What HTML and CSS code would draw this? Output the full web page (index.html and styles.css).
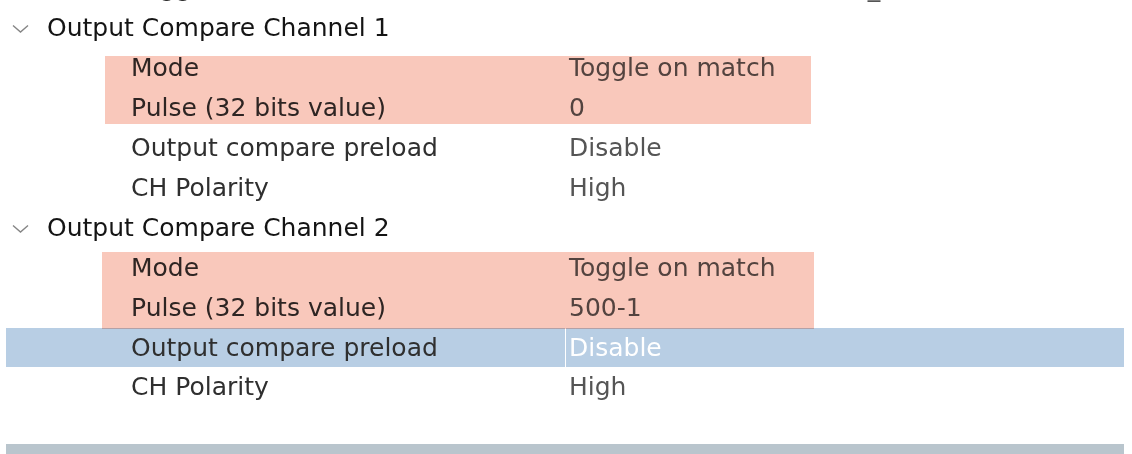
FILE: index.html
```html
<!DOCTYPE html>
<html lang="en">
<head>
<meta charset="utf-8">
<title>Parameter Settings</title>
<link rel="stylesheet" href="styles.css">
</head>
<body>
<div class="panel">
  <div class="tree">
    <div class="row">
      <div class="cell label">Trigger Event Selection</div>
      <div class="cell value">Reset (UG bit from TIMx_EGR)</div>
    </div>

    <div class="row group">
      <svg class="chevron" width="17" height="9" viewBox="0 0 17 9"><path d="M1 1.5 L8.5 8 L16 1.5" fill="none" stroke="#858585" stroke-width="1.4"/></svg>
      <span class="group-title">Output Compare Channel 1</span>
    </div>
    <div class="mark mark-a">
      <div class="row">
        <div class="cell label">Mode</div>
        <div class="cell value">Toggle on match</div>
      </div>
      <div class="row">
        <div class="cell label">Pulse (32 bits value)</div>
        <div class="cell value">0</div>
      </div>
    </div>
    <div class="row">
      <div class="cell label">Output compare preload</div>
      <div class="cell value">Disable</div>
    </div>
    <div class="row">
      <div class="cell label">CH Polarity</div>
      <div class="cell value">High</div>
    </div>

    <div class="row group">
      <svg class="chevron" width="17" height="9" viewBox="0 0 17 9"><path d="M1 1.5 L8.5 8 L16 1.5" fill="none" stroke="#858585" stroke-width="1.4"/></svg>
      <span class="group-title">Output Compare Channel 2</span>
    </div>
    <div class="mark mark-b">
      <div class="row">
        <div class="cell label">Mode</div>
        <div class="cell value">Toggle on match</div>
      </div>
      <div class="row">
        <div class="cell label">Pulse (32 bits value)</div>
        <div class="cell value">500-1</div>
      </div>
    </div>
    <div class="row selected">
      <div class="cell label">Output compare preload</div>
      <div class="cell value">Disable</div>
    </div>
    <div class="row">
      <div class="cell label">CH Polarity</div>
      <div class="cell value">High</div>
    </div>
  </div>
  <div class="hscroll"></div>
</div>
</body>
</html>
```

FILE: styles.css
```css
html, body {
  margin: 0;
  padding: 0;
  background: #ffffff;
  overflow: hidden;
}

body {
  font-family: "DejaVu Sans", "Liberation Sans", sans-serif;
  font-size: 25px;
}

.panel {
  margin: 0 8px 0 6px;
  height: 454px;
  overflow: hidden;
}

.tree {
  margin-top: -32.5px;
}

.row {
  display: grid;
  grid-template-columns: 559px 1fr;
  height: 40px;
  line-height: 40px;
  white-space: nowrap;
}

.cell {
  overflow: hidden;
}

.label {
  padding-left: 125px;
  color: #2f2f2f;
}

.value {
  padding-left: 3px;
  border-left: 1px solid transparent;
  color: #555555;
}

.row.group {
  display: flex;
  align-items: center;
  color: #141414;
}

.chevron {
  margin-left: 6px;
  margin-top: 1px;
  flex: none;
}

.group-title {
  margin-left: 18px;
}

.row.selected {
  background: #b8cee4;
  height: 39px;
}

.row.selected .value {
  border-left-color: #ffffff;
  color: #ffffff;
}

/* translucent marker laid over pairs of rows */
.mark {
  position: relative;
}

.mark::after {
  content: "";
  position: absolute;
  background: #f9c8bb;
  mix-blend-mode: multiply;
  pointer-events: none;
  z-index: 2;
}

.mark-a::after {
  left: 99px;
  right: 313px;
  top: 8.5px;
  bottom: 3.5px;
}

.mark-b::after {
  left: 96px;
  right: 310px;
  top: 4.5px;
  bottom: -1.5px;
}

.hscroll {
  margin-top: 37.5px;
  height: 14px;
  background: #b9c5cd;
}
```
